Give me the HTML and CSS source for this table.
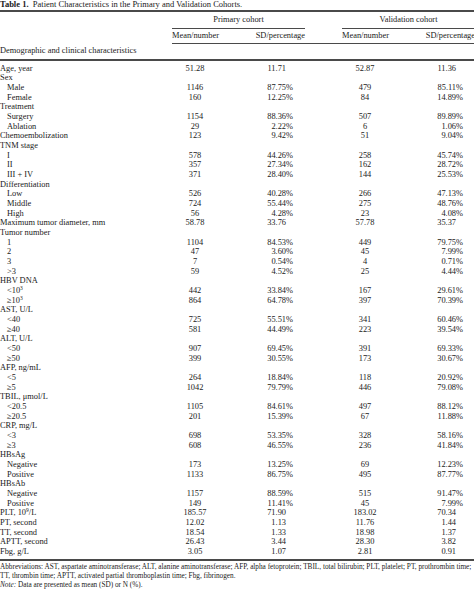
FILE: index.html
```html
<!DOCTYPE html>
<html>
<head>
<meta charset="utf-8">
<link rel="stylesheet" href="styles.css">
</head>
<body>
<div class="page">
  <div class="caption"><b>Table 1.</b>&nbsp; Patient Characteristics in the Primary and Validation Cohorts.</div>
  <table class="data">
    <colgroup>
      <col class="c-label"><col class="c-mean"><col class="c-sd"><col class="c-gap"><col class="c-mean"><col class="c-sd">
    </colgroup>
    <thead>
      <tr class="h-cohort">
        <td></td>
        <td colspan="2" class="cohort">Primary cohort</td>
        <td></td>
        <td colspan="2" class="cohort">Validation cohort</td>
      </tr>
      <tr class="h-sub">
        <td></td>
        <td class="sub-l">Mean/number</td>
        <td class="sub-r">SD/percentage</td>
        <td class="sub-gap"></td>
        <td class="sub-l">Mean/number</td>
        <td class="sub-r">SD/percentage</td>
      </tr>
      <tr class="h-demo">
        <td>Demographic and clinical characteristics</td>
        <td></td><td></td><td></td><td></td><td></td>
      </tr>
    </thead>
    <tbody>
      <tr class="first"><td>Age, year</td><td class="m">51.28</td><td class="s n">11.71</td><td></td><td class="m">52.87</td><td class="s n">11.36</td></tr>
      <tr><td>Sex</td><td></td><td></td><td></td><td></td><td></td></tr>
      <tr><td class="ind">Male</td><td class="m">1146</td><td class="s">87.75%</td><td></td><td class="m">479</td><td class="s">85.11%</td></tr>
      <tr><td class="ind">Female</td><td class="m">160</td><td class="s">12.25%</td><td></td><td class="m">84</td><td class="s">14.89%</td></tr>
      <tr><td>Treatment</td><td></td><td></td><td></td><td></td><td></td></tr>
      <tr><td class="ind">Surgery</td><td class="m">1154</td><td class="s">88.36%</td><td></td><td class="m">507</td><td class="s">89.89%</td></tr>
      <tr><td class="ind">Ablation</td><td class="m">29</td><td class="s">2.22%</td><td></td><td class="m">6</td><td class="s">1.06%</td></tr>
      <tr><td>Chemoembolization</td><td class="m">123</td><td class="s">9.42%</td><td></td><td class="m">51</td><td class="s">9.04%</td></tr>
      <tr><td>TNM stage</td><td></td><td></td><td></td><td></td><td></td></tr>
      <tr><td class="ind">I</td><td class="m">578</td><td class="s">44.26%</td><td></td><td class="m">258</td><td class="s">45.74%</td></tr>
      <tr><td class="ind">II</td><td class="m">357</td><td class="s">27.34%</td><td></td><td class="m">162</td><td class="s">28.72%</td></tr>
      <tr><td class="ind">III + IV</td><td class="m">371</td><td class="s">28.40%</td><td></td><td class="m">144</td><td class="s">25.53%</td></tr>
      <tr><td>Differentiation</td><td></td><td></td><td></td><td></td><td></td></tr>
      <tr><td class="ind">Low</td><td class="m">526</td><td class="s">40.28%</td><td></td><td class="m">266</td><td class="s">47.13%</td></tr>
      <tr><td class="ind">Middle</td><td class="m">724</td><td class="s">55.44%</td><td></td><td class="m">275</td><td class="s">48.76%</td></tr>
      <tr><td class="ind">High</td><td class="m">56</td><td class="s">4.28%</td><td></td><td class="m">23</td><td class="s">4.08%</td></tr>
      <tr><td>Maximum tumor diameter, mm</td><td class="m">58.78</td><td class="s n">33.76</td><td></td><td class="m">57.78</td><td class="s n">35.37</td></tr>
      <tr><td>Tumor number</td><td></td><td></td><td></td><td></td><td></td></tr>
      <tr><td class="ind">1</td><td class="m">1104</td><td class="s">84.53%</td><td></td><td class="m">449</td><td class="s">79.75%</td></tr>
      <tr><td class="ind">2</td><td class="m">47</td><td class="s">3.60%</td><td></td><td class="m">45</td><td class="s">7.99%</td></tr>
      <tr><td class="ind">3</td><td class="m">7</td><td class="s">0.54%</td><td></td><td class="m">4</td><td class="s">0.71%</td></tr>
      <tr><td class="ind">&gt;3</td><td class="m">59</td><td class="s">4.52%</td><td></td><td class="m">25</td><td class="s">4.44%</td></tr>
      <tr><td>HBV DNA</td><td></td><td></td><td></td><td></td><td></td></tr>
      <tr><td class="ind">&lt;10<sup>3</sup></td><td class="m">442</td><td class="s">33.84%</td><td></td><td class="m">167</td><td class="s">29.61%</td></tr>
      <tr><td class="ind">&ge;10<sup>3</sup></td><td class="m">864</td><td class="s">64.78%</td><td></td><td class="m">397</td><td class="s">70.39%</td></tr>
      <tr><td>AST, U/L</td><td></td><td></td><td></td><td></td><td></td></tr>
      <tr><td class="ind">&lt;40</td><td class="m">725</td><td class="s">55.51%</td><td></td><td class="m">341</td><td class="s">60.46%</td></tr>
      <tr><td class="ind">&ge;40</td><td class="m">581</td><td class="s">44.49%</td><td></td><td class="m">223</td><td class="s">39.54%</td></tr>
      <tr><td>ALT, U/L</td><td></td><td></td><td></td><td></td><td></td></tr>
      <tr><td class="ind">&lt;50</td><td class="m">907</td><td class="s">69.45%</td><td></td><td class="m">391</td><td class="s">69.33%</td></tr>
      <tr><td class="ind">&ge;50</td><td class="m">399</td><td class="s">30.55%</td><td></td><td class="m">173</td><td class="s">30.67%</td></tr>
      <tr><td>AFP, ng/mL</td><td></td><td></td><td></td><td></td><td></td></tr>
      <tr><td class="ind">&lt;5</td><td class="m">264</td><td class="s">18.84%</td><td></td><td class="m">118</td><td class="s">20.92%</td></tr>
      <tr><td class="ind">&ge;5</td><td class="m">1042</td><td class="s">79.79%</td><td></td><td class="m">446</td><td class="s">79.08%</td></tr>
      <tr><td>TBIL, &mu;mol/L</td><td></td><td></td><td></td><td></td><td></td></tr>
      <tr><td class="ind">&lt;20.5</td><td class="m">1105</td><td class="s">84.61%</td><td></td><td class="m">497</td><td class="s">88.12%</td></tr>
      <tr><td class="ind">&ge;20.5</td><td class="m">201</td><td class="s">15.39%</td><td></td><td class="m">67</td><td class="s">11.88%</td></tr>
      <tr><td>CRP, mg/L</td><td></td><td></td><td></td><td></td><td></td></tr>
      <tr><td class="ind">&lt;3</td><td class="m">698</td><td class="s">53.35%</td><td></td><td class="m">328</td><td class="s">58.16%</td></tr>
      <tr><td class="ind">&ge;3</td><td class="m">608</td><td class="s">46.55%</td><td></td><td class="m">236</td><td class="s">41.84%</td></tr>
      <tr><td>HBsAg</td><td></td><td></td><td></td><td></td><td></td></tr>
      <tr><td class="ind">Negative</td><td class="m">173</td><td class="s">13.25%</td><td></td><td class="m">69</td><td class="s">12.23%</td></tr>
      <tr><td class="ind">Positive</td><td class="m">1133</td><td class="s">86.75%</td><td></td><td class="m">495</td><td class="s">87.77%</td></tr>
      <tr><td>HBsAb</td><td></td><td></td><td></td><td></td><td></td></tr>
      <tr><td class="ind">Negative</td><td class="m">1157</td><td class="s">88.59%</td><td></td><td class="m">515</td><td class="s">91.47%</td></tr>
      <tr><td class="ind">Positive</td><td class="m">149</td><td class="s">11.41%</td><td></td><td class="m">45</td><td class="s">7.99%</td></tr>
      <tr><td>PLT, 10<sup>9</sup>/L</td><td class="m">185.57</td><td class="s n">71.90</td><td></td><td class="m">183.02</td><td class="s n">70.34</td></tr>
      <tr><td>PT, second</td><td class="m">12.02</td><td class="s n">1.13</td><td></td><td class="m">11.76</td><td class="s n">1.44</td></tr>
      <tr><td>TT, second</td><td class="m">18.54</td><td class="s n">1.33</td><td></td><td class="m">18.98</td><td class="s n">1.37</td></tr>
      <tr><td>APTT, second</td><td class="m">26.43</td><td class="s n">3.44</td><td></td><td class="m">28.30</td><td class="s n">3.82</td></tr>
      <tr class="last"><td>Fbg, g/L</td><td class="m">3.05</td><td class="s n">1.07</td><td></td><td class="m">2.81</td><td class="s n">0.91</td></tr>
    </tbody>
  </table>
  <div class="notes">
    <div class="note-line">Abbreviations: AST, aspartate aminotransferase; ALT, alanine aminotransferase; AFP, alpha fetoprotein; TBIL, total bilirubin; PLT, platelet; PT, prothrombin time;</div>
    <div class="note-line">TT, thrombin time; APTT, activated partial thromboplastin time; Fbg, fibrinogen.</div>
    <div class="note-line"><i>Note:</i> Data are presented as mean (SD) or N (%).</div>
  </div>
</div>
</body>
</html>
```

FILE: styles.css
```css
html, body {
  margin: 0;
  padding: 0;
  background: #ffffff;
}
body {
  width: 474px;
  height: 592px;
  overflow: hidden;
}
.page {
  width: 476px;
  font-family: "Liberation Serif", "Times New Roman", serif;
  color: #1a1a1a;
}
.caption {
  font-size: 8.5px;
  line-height: 9px;
  height: 10px;
  white-space: nowrap;
  border-bottom: 2px solid #4a4a4a;
}
.caption b {
  font-weight: bold;
}
.data {
  border-collapse: separate;
  border-spacing: 0;
  table-layout: fixed;
  width: 475px;
  font-size: 8.4px;
  line-height: 9.67px;
}
.c-label { width: 172px; }
.c-mean { width: 46px; }
.c-sd { width: 87px; }
.c-gap { width: 37px; }
.data td {
  padding: 0;
  white-space: nowrap;
  vertical-align: middle;
  overflow: visible;
}
.h-cohort td {
  height: 15.5px;
}
.h-cohort .cohort {
  text-align: center;
  border-bottom: 1.5px solid #4a4a4a;
}
.h-sub td {
  height: 14.5px;
}
.h-sub .sub-l,
.h-sub .sub-r,
.h-sub .sub-gap {
  border-bottom: 1.5px solid #4a4a4a;
}
.sub-l { text-align: left; }
.sub-r { text-align: right; }
.h-demo td {
  height: 14.5px;
  border-bottom: 2px solid #4a4a4a;
}
tbody td {
  height: 9.67px;
}
tbody tr.first td {
  padding-top: 3px;
}
tbody tr.last td {
  padding-bottom: 2.5px;
  border-bottom: 2px solid #4a4a4a;
}
.ind {
  padding-left: 7px !important;
}
.m {
  text-align: center;
}
.s {
  text-align: right;
  padding-right: 12px !important;
}
.s.n {
  padding-right: 19px !important;
}
sup {
  font-size: 5.5px;
  line-height: 0;
  vertical-align: 3.5px;
}
.notes {
  padding-top: 1.5px;
  font-size: 7.25px;
  line-height: 9px;
  width: 474px;
}
.note-line {
  white-space: nowrap;
}
```
